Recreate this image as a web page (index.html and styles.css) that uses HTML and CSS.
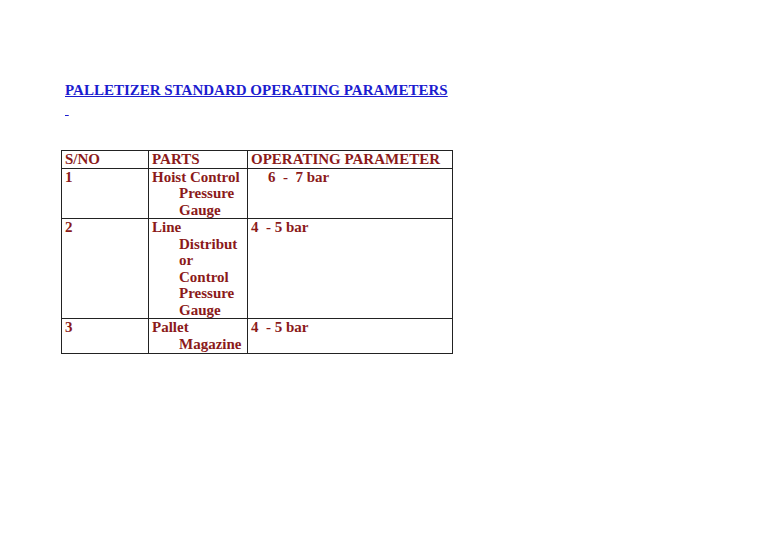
FILE: index.html
```html
<!DOCTYPE html>
<html>
<head>
<meta charset="utf-8">
<link rel="stylesheet" href="styles.css">
</head>
<body>
<div class="page">
  <p class="title"><a href="#">PALLETIZER STANDARD OPERATING PARAMETERS</a></p>
  <p class="dash"><a href="#">&nbsp;</a></p>
  <table class="sop">
    <colgroup>
      <col class="c1">
      <col class="c2">
      <col class="c3">
    </colgroup>
    <tr>
      <td>S/NO</td>
      <td>PARTS</td>
      <td>OPERATING PARAMETER</td>
    </tr>
    <tr>
      <td>1</td>
      <td class="hang">Hoist Control Pressure Gauge</td>
      <td><span class="ind">6&nbsp;&nbsp;-&nbsp;&nbsp;7 bar</span></td>
    </tr>
    <tr>
      <td>2</td>
      <td class="hang">Line<br>Distribut or Control Pressure Gauge</td>
      <td>4&nbsp;&nbsp;- 5 bar</td>
    </tr>
    <tr>
      <td>3</td>
      <td class="hang">Pallet Magazine</td>
      <td>4&nbsp;&nbsp;- 5 bar</td>
    </tr>
  </table>
</div>
</body>
</html>
```
FILE: styles.css
```css
html, body {
  margin: 0;
  padding: 0;
  background: #fff;
}
.page {
  padding: 82px 0 0 65px;
  font-family: "Liberation Serif", "Times New Roman", serif;
  font-weight: bold;
  font-size: 15px;
  line-height: 17px;
}
.title, .dash {
  margin: 0;
}
.title a, .dash a {
  color: #1c1ccf;
  text-decoration: underline;
}
.dash {
  margin-top: 2px;
}
.dash a {
  display: inline-block;
  width: 4px;
}
.sop {
  margin: 32px 0 0 -4px;
  border-collapse: collapse;
  table-layout: fixed;
  width: 391px;
  color: #8b1a1a;
  line-height: 16.55px;
}
.sop td {
  border: 1px solid #222;
  padding: 0 3px;
  vertical-align: top;
  text-align: left;
}
.c1 { width: 87px; }
.c2 { width: 99px; }
.c3 { width: 205px; }
.hang {
  padding-left: 30px !important;
  text-indent: -27px;
}
.ind {
  padding-left: 17px;
}
```
